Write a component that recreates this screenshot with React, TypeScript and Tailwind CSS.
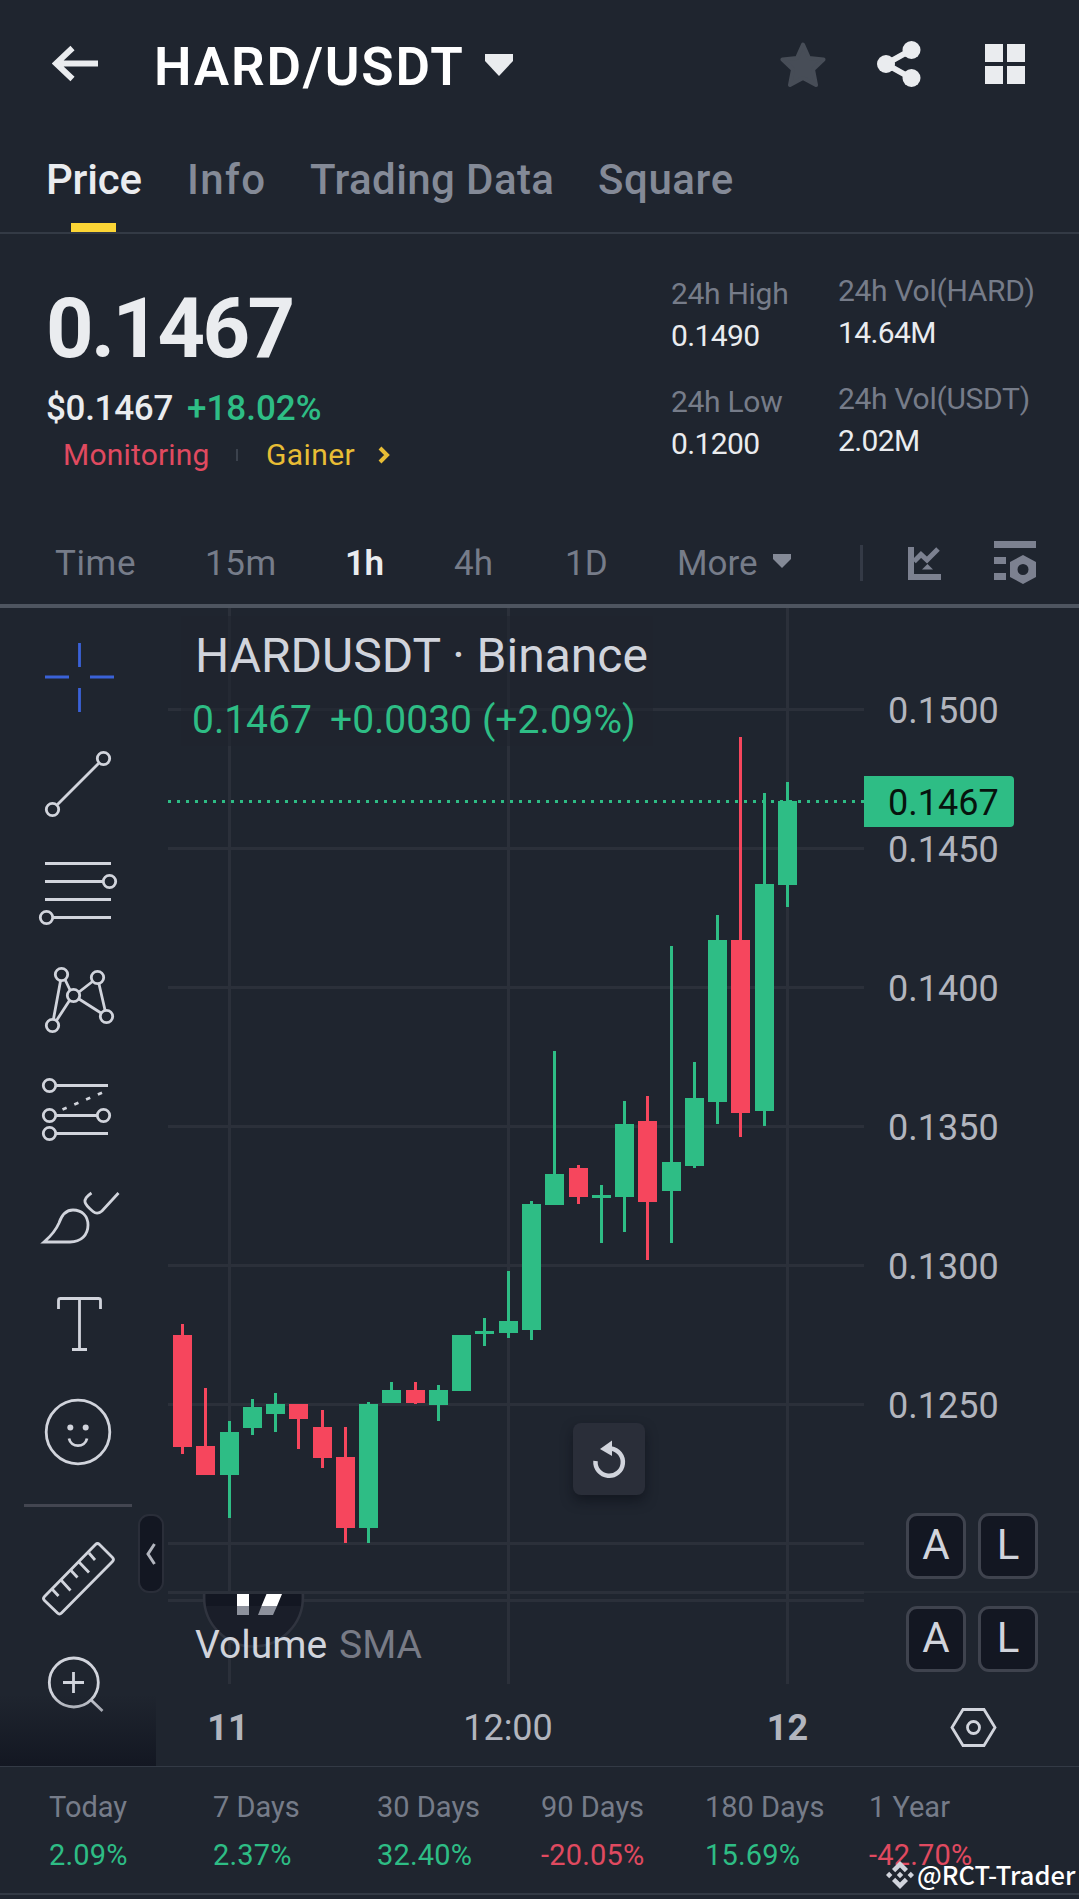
import type { ReactNode } from 'react'

const UP = '#2ebd85'
const DOWN = '#f6465d'

const tabs = [
  { label: 'Price', box: 'w-[141px] text-[#eaecef] tracking-[-0.2px]' },
  { label: 'Info', box: 'w-[123px] text-[#848a97] tracking-[1.4px]' },
  { label: 'Trading Data', box: 'w-[288px] text-[#848a97] tracking-[0.4px]' },
  { label: 'Square', box: 'text-[#848a97] tracking-[0.6px]' },
]

const intervals = [
  { label: 'Time', box: 'w-[150px] tracking-[0.6px]' },
  { label: '15m', box: 'w-[140px] tracking-[0.6px]' },
  { label: '1h', box: 'w-[109px] font-semibold text-[#eaecef] tracking-[-0.6px]' },
  { label: '4h', box: 'w-[111px]' },
  { label: '1D', box: 'w-[112px]' },
]

const stats = [
  [
    { label: '24h High', value: '0.1490' },
    { label: '24h Low', value: '0.1200' },
  ],
  [
    { label: '24h Vol(HARD)', value: '14.64M' },
    { label: '24h Vol(USDT)', value: '2.02M' },
  ],
]

const periods = [
  { label: 'Today', value: '2.09%', up: true },
  { label: '7 Days', value: '2.37%', up: true },
  { label: '30 Days', value: '32.40%', up: true },
  { label: '90 Days', value: '-20.05%', up: false },
  { label: '180 Days', value: '15.69%', up: true },
  { label: '1 Year', value: '-42.70%', up: false },
]

// x, high, body top, body bottom, low, up
const candles: [number, number, number, number, number, boolean][] = [
  [182.5, 716, 727, 839, 846, false],
  [205.5, 780, 838, 867, 867, false],
  [229.5, 813, 824, 867, 910, true],
  [252.5, 791, 799, 820, 827, true],
  [275.5, 785, 796, 806, 824, true],
  [298.5, 796, 796, 811, 841, false],
  [322.5, 802, 819, 850, 860, false],
  [345.5, 819, 849, 920, 935, false],
  [368.5, 794, 796, 920, 935, true],
  [391.5, 774, 782, 795, 795, true],
  [415.5, 774, 782, 795, 796, false],
  [438.5, 777, 782, 797, 813, true],
  [461.5, 727, 727, 783, 783, true],
  [484.5, 710, 723, 726, 738, true],
  [508.5, 663, 713, 725, 730, true],
  [531.5, 593, 596, 722, 732, true],
  [554.5, 443, 566, 597, 597, true],
  [578.5, 557, 560, 589, 596, false],
  [601.5, 577, 587, 590, 635, true],
  [624.5, 493, 516, 589, 624, true],
  [647.5, 488, 513, 594, 652, false],
  [671.5, 338, 554, 583, 635, true],
  [694.5, 454, 490, 558, 560, true],
  [717.5, 307, 332, 494, 516, true],
  [740.5, 129, 332, 505, 529, false],
  [764.5, 185, 276, 503, 518, true],
  [787.5, 174, 193, 277, 299, true],
]

const prices = [
  { y: 101.5, label: '0.1500' },
  { y: 240.5, label: '0.1450' },
  { y: 379.5, label: '0.1400' },
  { y: 518.5, label: '0.1350' },
  { y: 657.5, label: '0.1300' },
  { y: 796.5, label: '0.1250' },
  { y: 935.5, label: '' },
]

function Tool({ children, color = '#d1d4dc' }: { children: ReactNode; color?: string }) {
  return (
    <svg width="96" height="108" viewBox="0 0 96 108" fill="none" stroke={color} strokeWidth="2.8" className="shrink-0">
      {children}
    </svg>
  )
}

function Toolbar() {
  return (
    <aside className="absolute left-0 top-0 h-full w-[156px]">
      <div className="flex flex-col pt-[15px] pl-[31px]">
        <Tool color="#3a62d8">
          <path d="M14 54h24M59 54h24M48.5 20v24M48.5 65v24" />
        </Tool>
        <Tool>
          <path d="M67.5 32.5L26.5 73.5" />
          <circle cx="72.5" cy="27.5" r="6.2" />
          <circle cx="21.5" cy="78.5" r="6.2" />
        </Tool>
        <Tool>
          <path d="M14 24.5h66M14 42.5h58M14 60.5h66M22 78.5h58" />
          <circle cx="78.5" cy="42.5" r="6.2" />
          <circle cx="15.5" cy="78.5" r="6.2" />
        </Tool>
        <Tool>
          <path d="M29.5 34L22.5 72M34 32.5l5 10.5M38.5 53.5L25.5 73.5M48 45l13.5-10.5M68 37l6 26M48 52l22 14" />
          <circle cx="30.5" cy="27.5" r="6.2" />
          <circle cx="66.5" cy="30.5" r="6.2" />
          <circle cx="42.5" cy="48.5" r="6.2" />
          <circle cx="75.5" cy="69.5" r="6.2" />
          <circle cx="21.5" cy="78.5" r="6.2" />
        </Tool>
        <Tool>
          <path d="M25 30.5h52M25 60.5h41M25 78.5h52" />
          <path d="M31.5 54.5L74 36.5" strokeDasharray="4.5 8.3" />
          <circle cx="18.5" cy="30.5" r="6.2" />
          <circle cx="18.5" cy="60.5" r="6.2" />
          <circle cx="72.5" cy="60.5" r="6.2" />
          <circle cx="18.5" cy="78.5" r="6.2" />
        </Tool>
        <Tool>
          <path d="M13 79C20 73 25 67 28 60C31 51 36 47 42 47C51 47 57 53 57 62C57 72 50 79 39 79Z" />
          <path d="M60.5 30C56 33 53.5 36 54 39C54.5 42 59 46 62 48.5C65 51 68 50.5 71 48L87.5 30" />
        </Tool>
        <Tool>
          <path d="M27.5 38v-8.5q0-2 2-2h38q2 0 2 2V38M48.5 27.5v51M41 78.5h15" />
        </Tool>
        <Tool>
          <circle cx="47" cy="53" r="31.8" />
          <circle cx="39.3" cy="48.5" r="3" fill="#d1d4dc" stroke="none" />
          <circle cx="54.7" cy="48.5" r="3" fill="#d1d4dc" stroke="none" />
          <path d="M38 59.5C40 69 54 69 56 59.5" />
        </Tool>
      </div>
      <div className="mt-[17px] ml-6 h-[3px] w-[108px] bg-[#434651]" />
      <div className="flex flex-col pt-[18px] pl-[31px]">
        <Tool>
          <path d="M64.5 19.5q2-2 4 0l13 13q2 2 0 4L30.5 88q-2 2-4 0L13.5 75.5q-2-2 0-4Z" />
          <path d="M21 64l6.5 7M30 55l9.5 10.5M40 45.5l6.5 7M48 37l10 10.5M58 28l6 7" />
        </Tool>
        <Tool>
          <circle cx="42.8" cy="49.5" r="24.5" />
          <path d="M32 49.5h21M42.5 39v21M60 67l11.5 11" />
        </Tool>
      </div>
      <div className="absolute bottom-0 left-0 h-[72px] w-[156px] bg-gradient-to-b from-transparent to-[#131722]" />
    </aside>
  )
}

function Chart() {
  return (
    <svg width="1079" height="1158" viewBox="0 0 1079 1158" className="block" fontFamily="Roboto, sans-serif">
      <g stroke="#2b303a" strokeWidth="3">
        {[229.5, 508.5, 787.5].map(x => <path key={x} d={`M${x} 0V1076`} />)}
        {prices.map(p => <path key={p.y} d={`M168 ${p.y}H864`} />)}
        <path d="M168 984.5H864M168 992.5H864" />
        <path d="M864 984H1079" strokeWidth="1.5" />
      </g>
      <path d="M168 193.5H864" stroke={UP} strokeWidth="3" strokeDasharray="3 6" />
      {candles.map(([x, high, top, bottom, low, up]) => (
        <g key={x} fill={up ? UP : DOWN}>
          <rect x={x - 1.5} y={high} width="3" height={low - high} />
          <rect x={x - 9.5} y={top} width="19" height={bottom - top} />
        </g>
      ))}

      <g fill="#b2b5be" fontSize="36">
        {prices.map(p => <text key={p.y} x="888" y={p.y + 13.5}>{p.label}</text>)}
        <g textAnchor="middle">
          <text x="228" y="1132" fontWeight="700">11</text>
          <text x="508" y="1132">12:00</text>
          <text x="787.5" y="1132" fontWeight="700">12</text>
        </g>
      </g>
      <path d="M864 168h146q4 0 4 4v43q0 4-4 4H864Z" fill={UP} />
      <text x="888" y="207" fontSize="36" fill="#07130e">0.1467</text>

      <clipPath id="pane"><rect x="190" y="986" width="130" height="70" /></clipPath>
      <g clipPath="url(#pane)">
        <circle cx="253.5" cy="989" r="49.5" fill="#1a1e29" stroke="#30343f" strokeWidth="2.5" />
        <path d="M206 986h95v12h-95Z" fill="#131722" />
        <path d="M237 986h12v12h-12ZM266.5 986H282l-5 12h-15.5Z" fill="#fff" />
        <path d="M237 998h12v9h-12ZM261.5 998H277l-4 9h-15Z" fill="#8d919c" />
      </g>

      <g fill="none" stroke="#d1d4dc" strokeWidth="2.8">
        <path d="M963 1101.5h21l11 18-11 18h-21l-11-18Z" />
        <circle cx="973.5" cy="1119.5" r="6" />
      </g>
    </svg>
  )
}

function ScaleButtons({ className }: { className: string }) {
  return (
    <div className={`absolute left-[906px] flex gap-3 ${className}`}>
      {['A', 'L'].map(k => (
        <button key={k} className="flex h-[66px] w-[60px] items-center justify-center rounded-[11px] border-[3px] border-[#3f434e] bg-[#131722] pb-[3px] text-[42px] leading-none text-[#d1d4dc]">
          {k}
        </button>
      ))}
    </div>
  )
}

export default function App() {
  return (
    <main className="relative h-[1899px] w-[1079px] overflow-hidden bg-[#1f252f] font-[Roboto,sans-serif] whitespace-nowrap">
      <header className="flex h-[130px] items-center pl-[52px]">
        <svg width="48" height="40" viewBox="0 0 48 40" fill="none" stroke="#eaecef" strokeWidth="6" className="-mt-[3px]">
          <path d="M20.5 4L4 19.5L20.5 35M4.5 19.5H46" />
        </svg>
        <h1 className="ml-[54px] w-[331px] pt-[5px] text-[53px] font-semibold tracking-[1.8px] text-white">HARD/USDT</h1>
        <svg width="28" height="22" viewBox="0 0 28 22" fill="#eaecef"><path d="M0 0h28v7L14 22L0 7Z" /></svg>
        <svg width="46" height="48" viewBox="0 0 46 48" fill="#474d57" stroke="#474d57" strokeWidth="4" strokeLinejoin="round" className="ml-[267px]">
          <path d="M23 3.5L29 17L43.5 18.5L33 28.5L36 44L23 37L10 44L13 28.5L2.5 18.5L17 17Z" />
        </svg>
        <svg width="44" height="48" viewBox="0 0 44 48" fill="#eaecef" className="ml-[51px] -mt-[2px]">
          <path d="M34 10L9 24L34 38" fill="none" stroke="#eaecef" strokeWidth="6" />
          <circle cx="34.5" cy="10" r="9" />
          <circle cx="9" cy="24" r="9" />
          <circle cx="34.5" cy="38" r="9" />
        </svg>
        <svg width="40" height="40" viewBox="0 0 40 40" fill="#eaecef" className="ml-[64px] -mt-[2px]">
          <path d="M0 0h18v18H0ZM22 0h18v18H22ZM0 22h18v18H0ZM22 22h18v18H22Z" />
        </svg>
      </header>

      <nav className="flex h-[104px] border-b-2 border-[#333a45] pl-[46px]">
        {tabs.map((t, i) => (
          <div key={t.label} className={`relative shrink-0 pt-[25px] text-[42px] leading-[50px] font-medium ${t.box}`}>
            {t.label}
            {i === 0 && <span className="absolute bottom-0 left-[25px] h-[9px] w-[45px] bg-[#fcd535]" />}
          </div>
        ))}
      </nav>

      <section className="flex h-[302px] pl-[46px]">
        <div className="w-[625px] pt-[45px]">
          <div className="text-[83px] leading-[100px] font-bold tracking-[-2.6px] text-[#eaecef]">0.1467</div>
          <div className="flex pt-2 text-[35px] leading-[44px] font-medium">
            <span className="w-[141px] tracking-[-0.3px] text-[#eaecef]">$0.1467</span>
            <span className="text-[#2ebd85]">+18.02%</span>
          </div>
          <div className="flex items-center pt-[6px] pl-[17px] text-[30px] leading-[36px]">
            <span className="w-[173px] tracking-[0.2px] text-[#e04a60]">Monitoring</span>
            <span className="h-3 w-[2px] bg-[#3b424d]" />
            <span className="ml-[28px] w-[112px] tracking-[0.4px] text-[#e8bd35]">Gainer</span>
            <svg width="12" height="18" viewBox="0 0 12 18" fill="none" stroke="#e8bd35" strokeWidth="4"><path d="M2 2l7 7-7 7" /></svg>
          </div>
        </div>
        {stats.map((col, i) => (
          <div key={i} className={i === 0 ? 'w-[167px] pt-[39px]' : 'pt-9'}>
            {col.map(s => (
              <div key={s.label} className="h-[108px] text-[30px] leading-[42px]">
                <div className="tracking-[-0.3px] text-[#767c89]">{s.label}</div>
                <div className="tracking-[-0.6px] text-[#eaecef]">{s.value}</div>
              </div>
            ))}
          </div>
        ))}
      </section>

      <div className="flex h-[68px] items-center pb-[14px] pl-[55px] text-[35px] leading-[44px] text-[#767c89]">
        {intervals.map(t => <span key={t.label} className={`shrink-0 pt-[2px] ${t.box}`}>{t.label}</span>)}
        <span className="w-[96px] pt-[2px]">More</span>
        <svg width="18" height="14" viewBox="0 0 18 14" fill="#848a97" className="-mt-[5px]"><path d="M0 0h18v5L9 14L0 5Z" /></svg>
        <span className="ml-[69px] h-9 w-[3px] bg-[#343a46]" />
        <svg width="33" height="33" viewBox="0 0 33 33" fill="none" stroke="#7c8190" strokeWidth="6" className="ml-[45px]">
          <path d="M3 0v30H33" />
          <path d="M6 14.5L13 7.5L19 13L30 2" strokeWidth="5" />
          <path d="M14 22.5L19.5 17L25 22.5Z" fill="#7c8190" stroke="none" />
        </svg>
        <svg width="42" height="43" viewBox="0 0 42 43" fill="#7c8190" className="ml-[53px] -mt-[2px]">
          <path d="M0 0h42v7H0ZM0 16h12v7H0ZM0 32h12v7H0Z" />
          <path fillRule="evenodd" d="M29 14l13 7v15l-13 7-13-7V21ZM29 23a5.5 5.5 0 1 0 0 11a5.5 5.5 0 1 0 0-11Z" />
        </svg>
      </div>

      <section className="relative h-[1162px] border-t-4 border-[#4e5560]">
        <Chart />
        <Toolbar />

        <div className="absolute top-[8px] left-[181px] h-[130px] w-[472px] bg-[#1f252f]/60" />
        <div className="absolute top-[19px] left-[195px] text-[48px] leading-[58px] text-[#d1d4dc]">HARDUSDT · Binance</div>
        <div className="absolute top-[88px] left-[192px] flex text-[39px] leading-[48px] text-[#2ebd85]">
          <span className="w-[138px]">0.1467</span>
          <span className="w-[152px]">+0.0030</span>
          <span>(+2.09%)</span>
        </div>
        <div className="absolute top-[1013px] left-[195px] flex text-[39px] leading-[48px]">
          <span className="w-[144px] text-[#d1d4dc]">Volume</span>
          <span className="text-[#787b86]">SMA</span>
        </div>

        <button className="absolute top-[815px] left-[573px] flex h-[72px] w-[72px] items-center justify-center rounded-lg bg-[#2a2e39] shadow-[0_6px_12px_rgba(10,12,20,0.5)]">
          <svg width="36" height="40" viewBox="0 0 36 40" fill="none" stroke="#d1d4dc" strokeWidth="4.5">
            <path d="M4.5 22A13.7 13.7 0 1 0 20 9.5" />
            <path d="M9 10L21 1.5V17Z" fill="#d1d4dc" stroke="none" />
          </svg>
        </button>

        <button className="absolute top-[906px] left-[138px] flex h-[79px] w-[26px] items-center justify-center rounded-[11px] border-2 border-[#2a2e39] bg-[#131722]">
          <svg width="10" height="22" viewBox="0 0 10 22" fill="none" stroke="#b2b5be" strokeWidth="3"><path d="M8.5 1L2 11l6.5 10" /></svg>
        </button>

        <ScaleButtons className="top-[905px]" />
        <ScaleButtons className="top-[998px]" />
      </section>

      <footer className="h-[129px] border-t border-[#333a45] pt-[22px] pl-[49px]">
        <div className="flex">
          {periods.map(p => (
            <div key={p.label} className="w-[164px] shrink-0 text-[29px] leading-[36px]">
              <div className="text-[#767c89]">{p.label}</div>
              <div className={`pt-[12px] tracking-[0.2px] ${p.up ? 'text-[#2ebd85]' : 'text-[#e04a60]'}`}>{p.value}</div>
            </div>
          ))}
        </div>
      </footer>
      <div className="absolute top-[1893px] left-0 h-[2px] w-full bg-[#333a45]" />

      <div className="absolute top-[1856px] left-[886px] flex items-center gap-[3px] text-[25.5px] leading-[36px] text-white">
        <svg width="28" height="28" viewBox="0 0 28 28" fill="#d1d4dc" className="mt-[2px]">
          <path d="M14 0l8 8-3.2 3.2L14 6.4l-4.8 4.8L6 8ZM14 28l8-8-3.2-3.2L14 21.6l-4.8-4.8L6 20ZM3.2 10.8L6.4 14l-3.2 3.2L0 14ZM24.8 10.8L28 14l-3.2 3.2L21.6 14ZM14 10.8l3.2 3.2-3.2 3.2-3.2-3.2Z" />
        </svg>
        <span className="font-['Noto_Sans_CJK_SC',sans-serif] font-medium">@RCT-Trader</span>
      </div>
    </main>
  )
}
